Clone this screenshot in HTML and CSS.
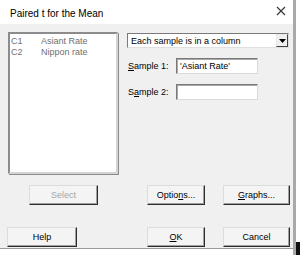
FILE: index.html
```html
<!DOCTYPE html>
<html>
<head>
<meta charset="utf-8">
<link rel="stylesheet" href="styles.css">
</head>
<body>
<div class="screen">
  <div class="window">
    <div class="titlebar">
      <span class="title">Paired t for the Mean</span>
      <svg class="close" width="10" height="10" viewBox="0 0 10 10"><path d="M1 1 L9 9 M9 1 L1 9" stroke="#333" stroke-width="1.1" fill="none"/></svg>
    </div>
    <div class="content">
      <div class="top">
        <div class="listbox">
          <div class="item"><span class="col">C1</span><span>Asiant Rate</span></div>
          <div class="item"><span class="col">C2</span><span>Nippon rate</span></div>
        </div>
        <div class="panel">
          <div class="combo">
            <span class="combo-text">Each sample is in a column</span>
            <span class="combo-btn"><svg width="7" height="4" viewBox="0 0 7 4"><path d="M0 0 H7 L3.5 4 Z" fill="#000"/></svg></span>
          </div>
          <div class="field">
            <span class="label"><u>S</u>ample 1:</span>
            <span class="input">'Asiant Rate'</span>
          </div>
          <div class="field">
            <span class="label">S<u>a</u>mple 2:</span>
            <span class="input"></span>
          </div>
        </div>
      </div>
      <div class="row row1">
        <span class="btn btn-select disabled">Select</span>
        <span class="btn btn-mid">Optio<u>n</u>s...</span>
        <span class="btn btn-right"><u>G</u>raphs...</span>
      </div>
      <div class="row row2">
        <span class="btn btn-help">Help</span>
        <span class="btn btn-mid"><u>O</u>K</span>
        <span class="btn btn-right">Cancel</span>
      </div>
    </div>
    <div class="bottom"></div>
  </div>
  <div class="side">
    <div class="side-top"></div>
    <div class="side-block"></div>
  </div>
</div>
</body>
</html>
```
FILE: styles.css
```css
html, body {
  margin: 0;
  padding: 0;
  background: #ffffff;
}
.screen {
  width: 300px;
  height: 255px;
  display: flex;
  overflow: hidden;
  font-family: "Liberation Sans", Arial, sans-serif;
  font-size: 9px;
  color: #000;
}
.window {
  width: 293px;
  height: 255px;
  border-right: 3px solid #a9a9a9;
  box-shadow: inset -1px 0 0 #d0d0d0;
  display: flex;
  flex-direction: column;
}
.titlebar {
  height: 24px;
  background: #ffffff;
  display: flex;
  align-items: center;
  justify-content: space-between;
  padding: 0 7px 0 10px;
  flex: none;
}
.title {
  font-family: "Liberation Sans", Arial, sans-serif;
  font-size: 10px;
  color: #000;
  padding-top: 2px;
}
.close {
  display: block;
  margin-top: -2px;
}
.content {
  background: #f0f0f0;
  height: 224px;
  flex: none;
  display: flex;
  flex-direction: column;
}
.bottom {
  flex: 1;
  background: #ffffff;
  border-top: 1px solid #9a9a9a;
}
.side {
  width: 4px;
  display: flex;
  flex-direction: column;
}
.side-top {
  flex: 1;
  background: #ffffff;
}
.side-block {
  height: 13px;
  background: #111;
}
.top {
  display: flex;
  padding: 8px 0 0 8px;
}
.listbox {
  width: 106px;
  height: 136px;
  background: #ffffff;
  border: 2px solid #8c8c8c;
  border-right-color: #d4d4d4;
  border-bottom-color: #d4d4d4;
  box-shadow: 1px 1px 0 #8c8c8c;
  padding-top: 2px;
  box-sizing: content-box;
}
.item {
  height: 11px;
  line-height: 11px;
  color: #707070;
  display: flex;
  padding-left: 1px;
}
.col {
  width: 30px;
}
.panel {
  margin-left: 9px;
  width: 162px;
  display: flex;
  flex-direction: column;
}
.combo {
  margin-top: 1px;
  height: 15px;
  box-sizing: border-box;
  background: #ffffff;
  border: 1px solid #7a7a7a;
  border-right-color: #e0e0e0;
  border-bottom-color: #e0e0e0;
  display: flex;
  align-items: center;
}
.combo-text {
  flex: 1;
  padding-left: 3px;
}
.combo-btn {
  width: 12px;
  height: 13px;
  box-sizing: border-box;
  background: #f0f0f0;
  border: 1px solid #e8e8e8;
  border-right-color: #404040;
  border-bottom-color: #404040;
  display: flex;
  align-items: center;
  justify-content: center;
}
.combo-btn svg {
  display: block;
}
.field {
  display: flex;
  align-items: center;
  margin-top: 10px;
}
.label {
  width: 48px;
  padding-left: 1px;
  color: #000;
}
.input {
  width: 82px;
  height: 16px;
  box-sizing: border-box;
  background: #ffffff;
  border: 1px solid #7a7a7a;
  border-right-color: #dadada;
  border-bottom-color: #dadada;
  box-shadow: inset 1px 1px 0 #a8a8a8;
  padding-left: 3px;
  line-height: 14px;
}
.row {
  display: flex;
}
.row1 {
  margin-top: 11px;
}
.row2 {
  margin-top: 22px;
}
.btn {
  height: 20px;
  box-sizing: border-box;
  background: #f4f4f4;
  border: 1px solid #dcdcdc;
  border-right-color: #2e2e2e;
  border-bottom-color: #2e2e2e;
  box-shadow: inset -1px -1px 0 #a0a0a0;
  display: flex;
  align-items: center;
  justify-content: center;
  color: #000;
}
.disabled {
  color: #a6a6a6;
}
.btn-select {
  margin-left: 29px;
  width: 69px;
}
.btn-help {
  margin-left: 7px;
  width: 70px;
}
.btn-select + .btn-mid {
  margin-left: 49px;
}
.btn-help + .btn-mid {
  margin-left: 70px;
}
.btn-mid {
  width: 58px;
}
.btn-right {
  margin-left: 18px;
  width: 67px;
}
```
